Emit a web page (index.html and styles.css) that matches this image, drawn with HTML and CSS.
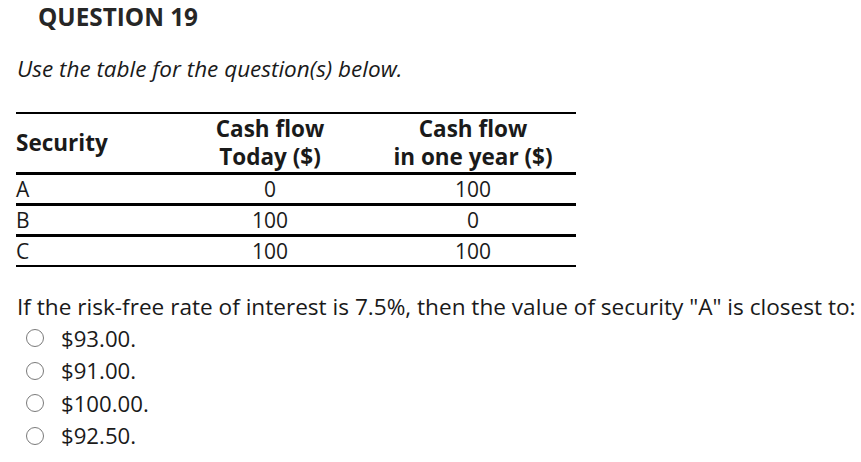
FILE: index.html
```html
<!DOCTYPE html>
<html>
<head>
<meta charset="utf-8">
<link rel="stylesheet" href="styles.css">
</head>
<body>
<div class="page">
  <h2 class="title">QUESTION 19</h2>
  <p class="intro">Use the table for the question(s) below.</p>
  <table class="cf">
    <thead>
      <tr>
        <th class="sec">Security</th>
        <th class="c2">Cash flow<br>Today ($)</th>
        <th class="c3">Cash flow<br>in one year ($)</th>
      </tr>
    </thead>
    <tbody>
      <tr><td class="sec">A</td><td>0</td><td>100</td></tr>
      <tr><td class="sec">B</td><td>100</td><td>0</td></tr>
      <tr class="last"><td class="sec">C</td><td>100</td><td>100</td></tr>
    </tbody>
  </table>
  <p class="question">If the risk-free rate of interest is 7.5%, then the value of security "A" is closest to:</p>
  <ul class="answers">
    <li><span class="radio"></span>$93.00.</li>
    <li><span class="radio"></span>$91.00.</li>
    <li><span class="radio"></span>$100.00.</li>
    <li><span class="radio"></span>$92.50.</li>
  </ul>
</div>
</body>
</html>
```
FILE: styles.css
```css
html, body {
  margin: 0;
  padding: 0;
  background: #fff;
}
.page {
  font-family: "Open Sans", sans-serif;
  color: #1a1a1a;
  padding: 0 0 0 16px;
}
.title {
  margin: 0;
  padding: 3px 0 0 22px;
  font-size: 24.3px;
  font-weight: 700;
  line-height: 28px;
  color: #262626;
}
.intro {
  margin: 23px 0 0 1px;
  font-size: 22.5px;
  font-style: italic;
  line-height: 30px;
}
.cf {
  margin-top: 28px;
  width: 560px;
  border-collapse: collapse;
  border-top: 2px solid #000;
  border-bottom: 2px solid #000;
  font-size: 21px;
}
.cf th {
  font-size: 22.5px;
  font-weight: 700;
  line-height: 28px;
  padding: 1px 0 1px;
  border-bottom: 3px solid #000;
}
.cf th.sec { text-align: left; width: 154px; }
.cf th.c2 { width: 200px; }
.cf td {
  text-align: center;
  line-height: 28px;
  padding: 0;
  border-bottom: 3px solid #000;
}
.cf tr.last td { border-bottom: 0; }
.cf td.sec { text-align: left; }
.question {
  margin: 25px 0 0 1px;
  font-size: 22.6px;
  line-height: 30px;
}
.answers {
  list-style: none;
  margin: 0;
  padding: 0 0 0 10px;
  font-size: 22.2px;
}
.answers li {
  display: flex;
  align-items: center;
  gap: 17px;
  height: 32.5px;
}
.radio {
  flex: none;
  width: 16px;
  height: 16px;
  border: 1.5px solid #7a7a7a;
  border-radius: 50%;
}
```
